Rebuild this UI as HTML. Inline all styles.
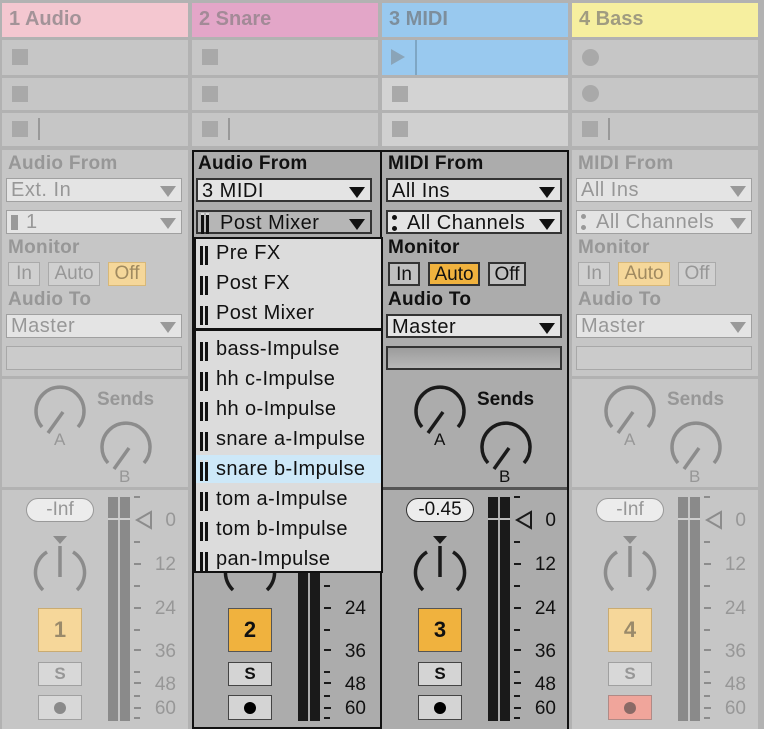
<!DOCTYPE html>
<html><head><meta charset="utf-8"><style>
*{margin:0;padding:0;box-sizing:border-box}
body{width:764px;height:729px;background:#b2b2b2;position:relative;overflow:hidden;font-family:"Liberation Sans",sans-serif;font-size:17px}
.a{position:absolute}
.col{position:absolute;top:0;width:190px;height:729px}
.hdr{position:absolute;left:2px;top:3px;width:186px;height:34px;font-weight:bold;font-size:20px;padding:5px 0 0 7px;color:#9b8f95}
.slot{position:absolute;left:2px;width:186px;background:#c6c6c6}
.sq{position:absolute;left:10px;width:16px;height:16px;background:#a9a9a9}
.bar{position:absolute;left:36px;width:2px;background:#999}
.panel{position:absolute;left:2px;width:186px;background:#c6c6c6}
.lbl{position:absolute;left:8px;font-weight:bold;font-size:19px;letter-spacing:.3px}
.dd{position:absolute;left:6px;width:176px;height:24px;border:1px solid #a0a0a0;background:#e4e4e4;padding:0 0 0 4px;font-size:20px;line-height:22px;letter-spacing:.5px;white-space:nowrap}
.dd .ar{position:absolute;right:5px;top:7px;width:0;height:0;border-left:8px solid transparent;border-right:8px solid transparent;border-top:11px solid #999}
.btn{position:absolute;top:262px;height:24px;border:1px solid #aaa;background:#d0d0d0;font-size:19px;text-align:center;line-height:22px}
.box{position:absolute;left:6px;top:346px;width:176px;height:24px;border:1px solid #a8a8a8;background:#cbcbcb}
.pill{position:absolute;left:26px;top:498px;width:68px;height:24px;border:1px solid #999;border-radius:12px;background:#ececec;text-align:center;font-size:19px;line-height:22px}
.nb{position:absolute;left:38px;top:608px;width:44px;height:44px;font-size:22px;font-weight:bold;text-align:center;line-height:42px}
.sb{position:absolute;left:38px;top:662px;width:44px;height:24px;font-weight:bold;font-size:17px;text-align:center;line-height:22px}
.rb{position:absolute;left:38px;top:695px;width:44px;height:25px}
.menu{position:absolute;left:194px;top:237px;width:189px;height:336px;background:#dcdcdc;border:2px solid #111;font-size:20px;letter-spacing:.4px;color:#111}
.it{position:absolute;left:0;width:185px;height:28px;padding-left:20px;line-height:28px;white-space:nowrap}
.ic{position:absolute;left:4px;top:5px;width:9px;height:19px}
.ic:before,.ic:after{content:"";position:absolute;top:0;width:3px;height:19px;background:#111;border-top:2px solid #dcdcdc;box-shadow:inset 0 2px 0 #111}
.ic:before{left:0}.ic:after{left:5px}
</style></head><body>

<!-- COLUMN 1 -->
<div class="col" style="left:0">
<div class="hdr" style="background:#f4c7d0;color:#a39398">1 Audio</div>
<div class="slot" style="top:40px;height:35px"><div class="sq" style="top:9px"></div></div>
<div class="slot" style="top:78px;height:32px"><div class="sq" style="top:8px"></div></div>
<div class="slot" style="top:113px;height:33px"><div class="sq" style="top:8px"></div><div class="bar" style="top:5px;height:22px"></div></div>
<div class="panel" style="top:150px;height:226px"></div>
<div class="panel" style="top:379px;height:108px"></div>
<div class="panel" style="top:490px;height:239px"></div>
<div style="color:#979797">
<div class="lbl" style="top:153px">Audio From</div>
<div class="dd" style="top:178px">Ext. In<span class="ar"></span></div>
<div class="dd" style="top:210px"><span style="display:inline-block;width:7px;height:15px;background:#999;vertical-align:-2px;margin-right:8px"></span>1<span class="ar"></span></div>
<div class="lbl" style="top:237px">Monitor</div>
<div class="btn" style="left:8px;width:32px">In</div>
<div class="btn" style="left:48px;width:52px">Auto</div>
<div class="btn" style="left:108px;width:38px;background:#f5d79a;border-color:#d8b878;color:#a08a60">Off</div>
<div class="lbl" style="top:289px">Audio To</div>
<div class="dd" style="top:314px">Master<span class="ar"></span></div>
<div class="box"></div>
<div class="pill">-Inf</div>
<div class="nb" style="background:#f6d79a;border:1px solid #c9ab72;color:#9a8a6a">1</div>
<div class="sb" style="background:#d8d8d8;border:1px solid #a0a0a0">S</div>
<div class="rb" style="background:#d8d8d8;border:1px solid #a0a0a0"><div class="a" style="left:15px;top:6px;width:12px;height:12px;border-radius:6px;background:#8a8a8a"></div></div>
</div>
<svg class="a" style="left:0;top:0" width="190" height="729" fill="none" stroke="#8c8c8c" stroke-width="3.5">
<path d="M42 427 A24 24 0 1 1 78 427"/><path d="M63 412 L48 433"/>
<path d="M108 463 A24 24 0 1 1 144 463"/><path d="M129 448 L114 469"/>
<g fill="#979797" stroke="none" font-family="Liberation Sans" font-size="17"><text x="54" y="445">A</text><text x="119" y="482">B</text></g>
<text x="97" y="405" fill="#979797" stroke="none" font-family="Liberation Sans" font-weight="bold" font-size="19">Sends</text>
<path d="M47 552 A24 24 0 0 0 43 590"/><path d="M73 552 A24 24 0 0 1 77 590"/><path d="M60 546 V577"/>
<polygon points="53,536 67,536 60,544" fill="#8c8c8c" stroke="none"/>
<rect x="108" y="497" width="10" height="224" fill="#8a8a8a" stroke="none"/><rect x="120" y="497" width="10" height="224" fill="#8a8a8a" stroke="none"/>
<rect x="108" y="518" width="22" height="2" fill="#cfcfcf" stroke="none"/>
<polygon points="151,512 151,528 137,520" stroke-width="2"/>
<g stroke-width="2"><path d="M134 497h6M134 542h6M134 564h7M134 586h6M134 608h7M134 630h6M134 650h7M134 672h6M134 683h7M134 696h6M134 708h7M134 718h6"/></g>
<g fill="#979797" stroke="none" font-family="Liberation Sans" font-size="19" text-anchor="end"><text x="176" y="526">0</text><text x="176" y="570">12</text><text x="176" y="614">24</text><text x="176" y="657">36</text><text x="176" y="690">48</text><text x="176" y="714">60</text></g>
</svg>
</div>

<!-- COLUMN 2 -->
<div class="col" style="left:190px">
<div class="hdr" style="background:#e3a6c8;color:#a38a97">2 Snare</div>
<div class="slot" style="top:40px;height:35px"><div class="sq" style="top:9px"></div></div>
<div class="slot" style="top:78px;height:32px"><div class="sq" style="top:8px"></div></div>
<div class="slot" style="top:113px;height:33px"><div class="sq" style="top:8px"></div><div class="bar" style="top:5px;height:22px"></div></div>
<div class="a" style="left:2px;top:150px;width:190px;height:579px;background:#acacac;border:2px solid #111;border-right:none"></div>
<div class="a" style="left:4px;top:487px;width:186px;height:3px;background:#555"></div>
<div style="color:#111">
<div class="lbl" style="top:153px">Audio From</div>
<div class="dd" style="top:178px;border:2px solid #333">3 MIDI<span class="ar" style="border-top-color:#111"></span></div>
<div class="dd" style="top:210px;border:2px solid #333;background:#b6b6b6;padding-left:22px"><span class="ic" style="left:3px;top:1px"></span>Post Mixer<span class="ar" style="border-top-color:#111"></span></div>
<div class="nb" style="background:#f0b23e;border:1px solid #555;color:#111">2</div>
<div class="sb" style="background:#d4d4d4;border:1px solid #444">S</div>
<div class="rb" style="background:#d4d4d4;border:1px solid #444"><div class="a" style="left:15px;top:6px;width:12px;height:12px;border-radius:6px;background:#000"></div></div>
</div>
<svg class="a" style="left:0;top:0" width="190" height="729" fill="none" stroke="#1a1a1a" stroke-width="3.5">
<path d="M47 552 A24 24 0 0 0 43 590"/><path d="M73 552 A24 24 0 0 1 77 590"/>
<rect x="108" y="497" width="10" height="224" fill="#1a1a1a" stroke="none"/><rect x="120" y="497" width="10" height="224" fill="#1a1a1a" stroke="none"/>
<g stroke-width="2"><path d="M134 586h6M134 608h7M134 630h6M134 650h7M134 672h6M134 683h7M134 696h6M134 708h7M134 718h6"/></g>
<g fill="#111" stroke="none" font-family="Liberation Sans" font-size="19" text-anchor="end"><text x="176" y="614">24</text><text x="176" y="657">36</text><text x="176" y="690">48</text><text x="176" y="714">60</text></g>
</svg>
</div>

<!-- COLUMN 3 -->
<div class="col" style="left:380px">
<div class="hdr" style="background:#99c9ef;color:#7d8e9c">3 MIDI</div>
<div class="slot" style="top:40px;height:35px;background:#99c9ef"><div class="a" style="left:9px;top:9px;width:0;height:0;border-top:8px solid transparent;border-bottom:8px solid transparent;border-left:14px solid #8aa4b8"></div><div class="bar" style="left:33px;top:0;height:35px;background:#7ea6c4"></div></div>
<div class="slot" style="top:78px;height:32px;background:#d3d3d3"><div class="sq" style="top:8px"></div></div>
<div class="slot" style="top:113px;height:33px;background:#d0d0d0"><div class="sq" style="top:8px"></div></div>
<div class="a" style="left:0;top:150px;width:189px;height:579px;background:#acacac;border:2px solid #111;border-bottom:none"></div>
<div class="a" style="left:2px;top:487px;width:185px;height:3px;background:#555"></div>
<div style="color:#111">
<div class="lbl" style="top:153px">MIDI From</div>
<div class="dd" style="top:178px;border:2px solid #333">All Ins<span class="ar" style="border-top-color:#111"></span></div>
<div class="dd" style="top:210px;border:2px solid #333"><span style="display:inline-block;width:6px;height:16px;border-left:5px dotted #111;vertical-align:-2px;margin-right:9px"></span>All Channels<span class="ar" style="border-top-color:#111"></span></div>
<div class="lbl" style="top:237px">Monitor</div>
<div class="btn" style="left:8px;width:32px;border:2px solid #333;background:#c0c0c0">In</div>
<div class="btn" style="left:48px;width:52px;border:2px solid #333;background:#f0b23e">Auto</div>
<div class="btn" style="left:108px;width:38px;border:2px solid #333;background:#c0c0c0">Off</div>
<div class="lbl" style="top:289px">Audio To</div>
<div class="dd" style="top:314px;border:2px solid #333">Master<span class="ar" style="border-top-color:#111"></span></div>
<div class="box" style="border:2px solid #333;background:linear-gradient(#9c9c9c,#b8b8b8)"></div>
<div class="pill" style="border:1px solid #333">-0.45</div>
<div class="nb" style="background:#f0b23e;border:1px solid #555;color:#111">3</div>
<div class="sb" style="background:#d4d4d4;border:1px solid #444">S</div>
<div class="rb" style="background:#d4d4d4;border:1px solid #444"><div class="a" style="left:15px;top:6px;width:12px;height:12px;border-radius:6px;background:#000"></div></div>
</div>
<svg class="a" style="left:0;top:0" width="190" height="729" fill="none" stroke="#1a1a1a" stroke-width="3.5">
<path d="M42 427 A24 24 0 1 1 78 427"/><path d="M63 412 L48 433"/>
<path d="M108 463 A24 24 0 1 1 144 463"/><path d="M129 448 L114 469"/>
<g fill="#111" stroke="none" font-family="Liberation Sans" font-size="17"><text x="54" y="445">A</text><text x="119" y="482">B</text></g>
<text x="97" y="405" fill="#111" stroke="none" font-family="Liberation Sans" font-weight="bold" font-size="19">Sends</text>
<path d="M47 552 A24 24 0 0 0 43 590"/><path d="M73 552 A24 24 0 0 1 77 590"/><path d="M60 546 V577"/>
<polygon points="53,536 67,536 60,544" fill="#1a1a1a" stroke="none"/>
<rect x="108" y="497" width="10" height="224" fill="#1a1a1a" stroke="none"/><rect x="120" y="497" width="10" height="224" fill="#1a1a1a" stroke="none"/>
<rect x="108" y="518" width="22" height="2" fill="#bbb" stroke="none"/>
<polygon points="151,512 151,528 137,520" stroke-width="2"/>
<g stroke-width="2"><path d="M134 497h6M134 542h6M134 564h7M134 586h6M134 608h7M134 630h6M134 650h7M134 672h6M134 683h7M134 696h6M134 708h7M134 718h6"/></g>
<g fill="#111" stroke="none" font-family="Liberation Sans" font-size="19" text-anchor="end"><text x="176" y="526">0</text><text x="176" y="570">12</text><text x="176" y="614">24</text><text x="176" y="657">36</text><text x="176" y="690">48</text><text x="176" y="714">60</text></g>
</svg>
</div>

<!-- COLUMN 4 -->
<div class="col" style="left:570px">
<div class="hdr" style="background:#f6ef9f;color:#a09c80">4 Bass</div>
<div class="slot" style="top:40px;height:35px"><div class="a" style="left:10px;top:9px;width:17px;height:17px;border-radius:9px;background:#a9a9a9"></div></div>
<div class="slot" style="top:78px;height:32px"><div class="a" style="left:10px;top:7px;width:17px;height:17px;border-radius:9px;background:#a9a9a9"></div></div>
<div class="slot" style="top:113px;height:33px"><div class="sq" style="top:8px"></div><div class="bar" style="top:5px;height:22px"></div></div>
<div class="panel" style="top:150px;height:226px"></div>
<div class="panel" style="top:379px;height:108px"></div>
<div class="panel" style="top:490px;height:239px"></div>
<div style="color:#979797">
<div class="lbl" style="top:153px">MIDI From</div>
<div class="dd" style="top:178px">All Ins<span class="ar"></span></div>
<div class="dd" style="top:210px"><span style="display:inline-block;width:6px;height:16px;border-left:5px dotted #999;vertical-align:-2px;margin-right:9px"></span>All Channels<span class="ar"></span></div>
<div class="lbl" style="top:237px">Monitor</div>
<div class="btn" style="left:8px;width:32px">In</div>
<div class="btn" style="left:48px;width:52px;background:#f5d79a;border-color:#d8b878;color:#a08a60">Auto</div>
<div class="btn" style="left:108px;width:38px">Off</div>
<div class="lbl" style="top:289px">Audio To</div>
<div class="dd" style="top:314px">Master<span class="ar"></span></div>
<div class="box"></div>
<div class="pill">-Inf</div>
<div class="nb" style="background:#f6d79a;border:1px solid #c9ab72;color:#9a8a6a">4</div>
<div class="sb" style="background:#d8d8d8;border:1px solid #a0a0a0">S</div>
<div class="rb" style="background:#f0a59b;border:1px solid #b08a86"><div class="a" style="left:15px;top:6px;width:12px;height:12px;border-radius:6px;background:#8a6a66"></div></div>
</div>
<svg class="a" style="left:0;top:0" width="190" height="729" fill="none" stroke="#8c8c8c" stroke-width="3.5">
<path d="M42 427 A24 24 0 1 1 78 427"/><path d="M63 412 L48 433"/>
<path d="M108 463 A24 24 0 1 1 144 463"/><path d="M129 448 L114 469"/>
<g fill="#979797" stroke="none" font-family="Liberation Sans" font-size="17"><text x="54" y="445">A</text><text x="119" y="482">B</text></g>
<text x="97" y="405" fill="#979797" stroke="none" font-family="Liberation Sans" font-weight="bold" font-size="19">Sends</text>
<path d="M47 552 A24 24 0 0 0 43 590"/><path d="M73 552 A24 24 0 0 1 77 590"/><path d="M60 546 V577"/>
<polygon points="53,536 67,536 60,544" fill="#8c8c8c" stroke="none"/>
<rect x="108" y="497" width="10" height="224" fill="#8a8a8a" stroke="none"/><rect x="120" y="497" width="10" height="224" fill="#8a8a8a" stroke="none"/>
<rect x="108" y="518" width="22" height="2" fill="#cfcfcf" stroke="none"/>
<polygon points="151,512 151,528 137,520" stroke-width="2"/>
<g stroke-width="2"><path d="M134 497h6M134 542h6M134 564h7M134 586h6M134 608h7M134 630h6M134 650h7M134 672h6M134 683h7M134 696h6M134 708h7M134 718h6"/></g>
<g fill="#979797" stroke="none" font-family="Liberation Sans" font-size="19" text-anchor="end"><text x="176" y="526">0</text><text x="176" y="570">12</text><text x="176" y="614">24</text><text x="176" y="657">36</text><text x="176" y="690">48</text><text x="176" y="714">60</text></g>
</svg>
</div>

<!-- MENU -->
<div class="menu">
<div class="it" style="top:0px"><span class="ic"></span>Pre FX</div>
<div class="it" style="top:30px"><span class="ic"></span>Post FX</div>
<div class="it" style="top:60px"><span class="ic"></span>Post Mixer</div>
<div class="a" style="left:0;top:89px;width:185px;height:3px;background:#111"></div>
<div class="it" style="top:96px"><span class="ic"></span>bass-Impulse</div>
<div class="it" style="top:126px"><span class="ic"></span>hh c-Impulse</div>
<div class="it" style="top:156px"><span class="ic"></span>hh o-Impulse</div>
<div class="it" style="top:186px"><span class="ic"></span>snare a-Impulse</div>
<div class="it" style="top:216px;background:#cde8f8"><span class="ic"></span>snare b-Impulse</div>
<div class="it" style="top:246px"><span class="ic"></span>tom a-Impulse</div>
<div class="it" style="top:276px"><span class="ic"></span>tom b-Impulse</div>
<div class="it" style="top:306px"><span class="ic"></span>pan-Impulse</div>
</div>
</body></html>
